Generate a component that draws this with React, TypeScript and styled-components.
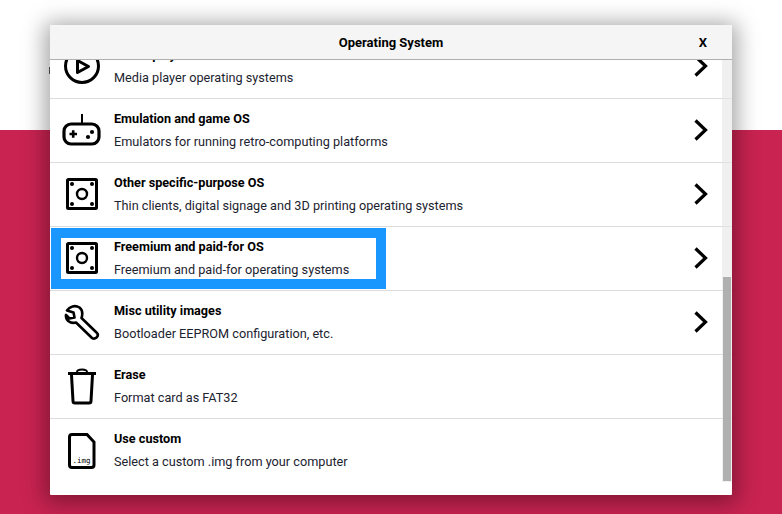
import React from "react";
import styled, { createGlobalStyle } from "styled-components";

const Global = createGlobalStyle`
  html, body { margin: 0; padding: 0; width: 782px; height: 514px; overflow: hidden; background: #fff; }
  #root { width: 782px; height: 514px; }
`;

const Page = styled.div`
  position: relative;
  width: 782px;
  height: 514px;
  padding: 25px 50px 19px;
  box-sizing: border-box;
  background: linear-gradient(#fff 0 130px, #c92351 130px);
  font-family: Roboto, "Liberation Sans", sans-serif;
  color: #000;
`;

const Peek = styled.div`
  position: absolute;
  left: 49px;
  top: 67px;
  width: 1px;
  height: 7px;
  background: #444;
  z-index: 1;
`;

const Dialog = styled.div`
  position: relative;
  width: 682px;
  height: 470px;
  background: #fff;
  box-shadow: 0 3px 22px 5px rgba(0, 0, 0, 0.36);
  display: flex;
  flex-direction: column;
  overflow: hidden;
  border-radius: 1px;
`;

const Header = styled.header`
  flex: none;
  height: 34px;
  background: #f5f5f5;
  border-bottom: 1px solid #b0b0b0;
  display: flex;
  align-items: center;
  justify-content: center;
  position: relative;
  z-index: 2;
  font-size: 13px;
  font-weight: 700;
`;

const Close = styled.span`
  position: absolute;
  right: 25px;
  top: 10px;
  font-size: 13px;
  font-weight: 700;
  line-height: 16px;
`;

const List = styled.div`
  flex: 1;
  margin-top: -25px;
`;

const Row = styled.div`
  box-sizing: border-box;
  height: 64px;
  padding: 0 23px 1px 11px;
  border-bottom: 1px solid #dcdcdc;
  display: flex;
  align-items: center;
  justify-content: space-between;

  &:last-child {
    border-bottom: none;
  }
`;

const Content = styled.div<{ $focused?: boolean }>`
  box-sizing: border-box;
  height: 41px;
  width: 315px;
  display: flex;
  align-items: center;
  outline: ${(p) => (p.$focused ? "10px solid #1a96ff" : "none")};
`;

const IconBox = styled.div`
  flex: none;
  width: 42px;
  height: 41px;
  margin-right: 11px;
  display: flex;
  align-items: center;
  justify-content: center;
`;

const Texts = styled.div`
  white-space: nowrap;
  display: flex;
  flex-direction: column;
  gap: 7px;
`;

const Title = styled.div`
  font-size: 12.65px;
  font-weight: 700;
  line-height: 16px;
`;

const Subtitle = styled.div`
  font-size: 12.7px;
  line-height: 16px;
  color: #1c2330;
`;

const Track = styled.div`
  position: absolute;
  right: 0;
  top: 35px;
  bottom: 13px;
  width: 10px;
  background: rgba(230, 230, 230, 0.6);
`;

const Thumb = styled.div`
  position: absolute;
  left: 1px;
  right: 1px;
  bottom: 1px;
  height: 204px;
  background: rgba(160, 160, 160, 0.8);
`;

const Chevron = () => (
  <svg width="16" height="24" viewBox="0 0 16 24" fill="none">
    <path d="M2.5 2.5 L12.5 12 L2.5 21.5" stroke="#000" strokeWidth="3.2" />
  </svg>
);

const Play = () => (
  <svg width="36" height="36" viewBox="0 0 36 36" fill="none" stroke="#000" strokeWidth="3">
    <circle cx="18" cy="18" r="16.5" />
    <path d="M13.5 12.5 L24.5 18.5 L13.5 24.5 Z" strokeLinejoin="round" />
  </svg>
);

const Gamepad = () => (
  <svg width="40" height="32" viewBox="0 0 40 32" fill="none" stroke="#000">
    <path d="M20 0 V10" strokeWidth="2" />
    <rect x="2" y="10" width="35" height="20" rx="7" strokeWidth="3.2" />
    <path d="M7.5 20 H15 M11.2 16.2 V23.8" strokeWidth="2.6" />
    <circle cx="30" cy="18" r="2.1" fill="#000" stroke="none" />
    <circle cx="26" cy="23" r="2.1" fill="#000" stroke="none" />
  </svg>
);

const Board = () => (
  <svg width="32" height="32" viewBox="0 0 32 32" fill="none" stroke="#000">
    <rect x="1.5" y="1.5" width="29" height="29" rx="1" strokeWidth="3" />
    <circle cx="16" cy="16" r="5" strokeWidth="2.4" />
    <g fill="#000" stroke="none">
      <circle cx="6" cy="6" r="2" />
      <circle cx="26" cy="6" r="2" />
      <circle cx="6" cy="26" r="2" />
      <circle cx="26" cy="26" r="2" />
    </g>
  </svg>
);

const Wrench = () => (
  <svg width="36" height="36" viewBox="0 0 36 36" fill="none" stroke="#000" strokeWidth="2.6" strokeLinejoin="round">
    <path d="M15.5 3.5 C11 .8 5.5 2.5 3 6.5 L9.5 8.5 L10.5 13.5 L5.5 14.5 L2 11 C1.5 16 6 20 12 18.5 L28 34 C29.5 35 31 34.8 32.5 33.5 C34 32 34.2 30.3 33 29 L17.5 14 C18.8 10 18.5 6 15.5 3.5 Z" />
  </svg>
);

const Trash = () => (
  <svg width="30" height="37" viewBox="0 0 30 37" fill="none" stroke="#000">
    <path d="M1 5.5 H29" strokeWidth="3" />
    <path d="M10 4 Q10 1.5 15 1.5 Q20 1.5 20 4" strokeWidth="2" />
    <path d="M4.5 7 L6 33 Q6 35 8 35 H22 Q24 35 24 33 L25.5 7" strokeWidth="3" />
  </svg>
);

const FileLabel = styled.text`
  font-family: "DejaVu Sans Mono", "Liberation Mono", monospace;
  font-size: 7.5px;
`;

const ImgFile = () => (
  <svg width="28" height="36" viewBox="0 0 28 36" fill="none">
    <path d="M4 1.5 H19 L26 9 V32 Q26 34.5 23.5 34.5 H4 Q1.5 34.5 1.5 32 V4 Q1.5 1.5 4 1.5 Z" stroke="#000" strokeWidth="3" />
    <FileLabel x="4.5" y="29.5" fill="#000">.img</FileLabel>
  </svg>
);

const rows = [
  { icon: <Play />, title: "Media player OS", sub: "Media player operating systems", more: true },
  { icon: <Gamepad />, title: "Emulation and game OS", sub: "Emulators for running retro-computing platforms", more: true },
  { icon: <Board />, title: "Other specific-purpose OS", sub: "Thin clients, digital signage and 3D printing operating systems", more: true },
  { icon: <Board />, title: "Freemium and paid-for OS", sub: "Freemium and paid-for operating systems", more: true, focused: true },
  { icon: <Wrench />, title: "Misc utility images", sub: "Bootloader EEPROM configuration, etc.", more: true },
  { icon: <Trash />, title: "Erase", sub: "Format card as FAT32" },
  { icon: <ImgFile />, title: "Use custom", sub: "Select a custom .img from your computer" },
];

export default function App() {
  return (
    <Page>
      <Global />
      <Peek />
      <Dialog>
        <Header>
          Operating System
          <Close>X</Close>
        </Header>
        <List>
          {rows.map((r) => (
            <Row key={r.title}>
              <Content $focused={r.focused}>
                <IconBox>{r.icon}</IconBox>
                <Texts>
                  <Title>{r.title}</Title>
                  <Subtitle>{r.sub}</Subtitle>
                </Texts>
              </Content>
              {r.more && <Chevron />}
            </Row>
          ))}
        </List>
        <Track>
          <Thumb />
        </Track>
      </Dialog>
    </Page>
  );
}
